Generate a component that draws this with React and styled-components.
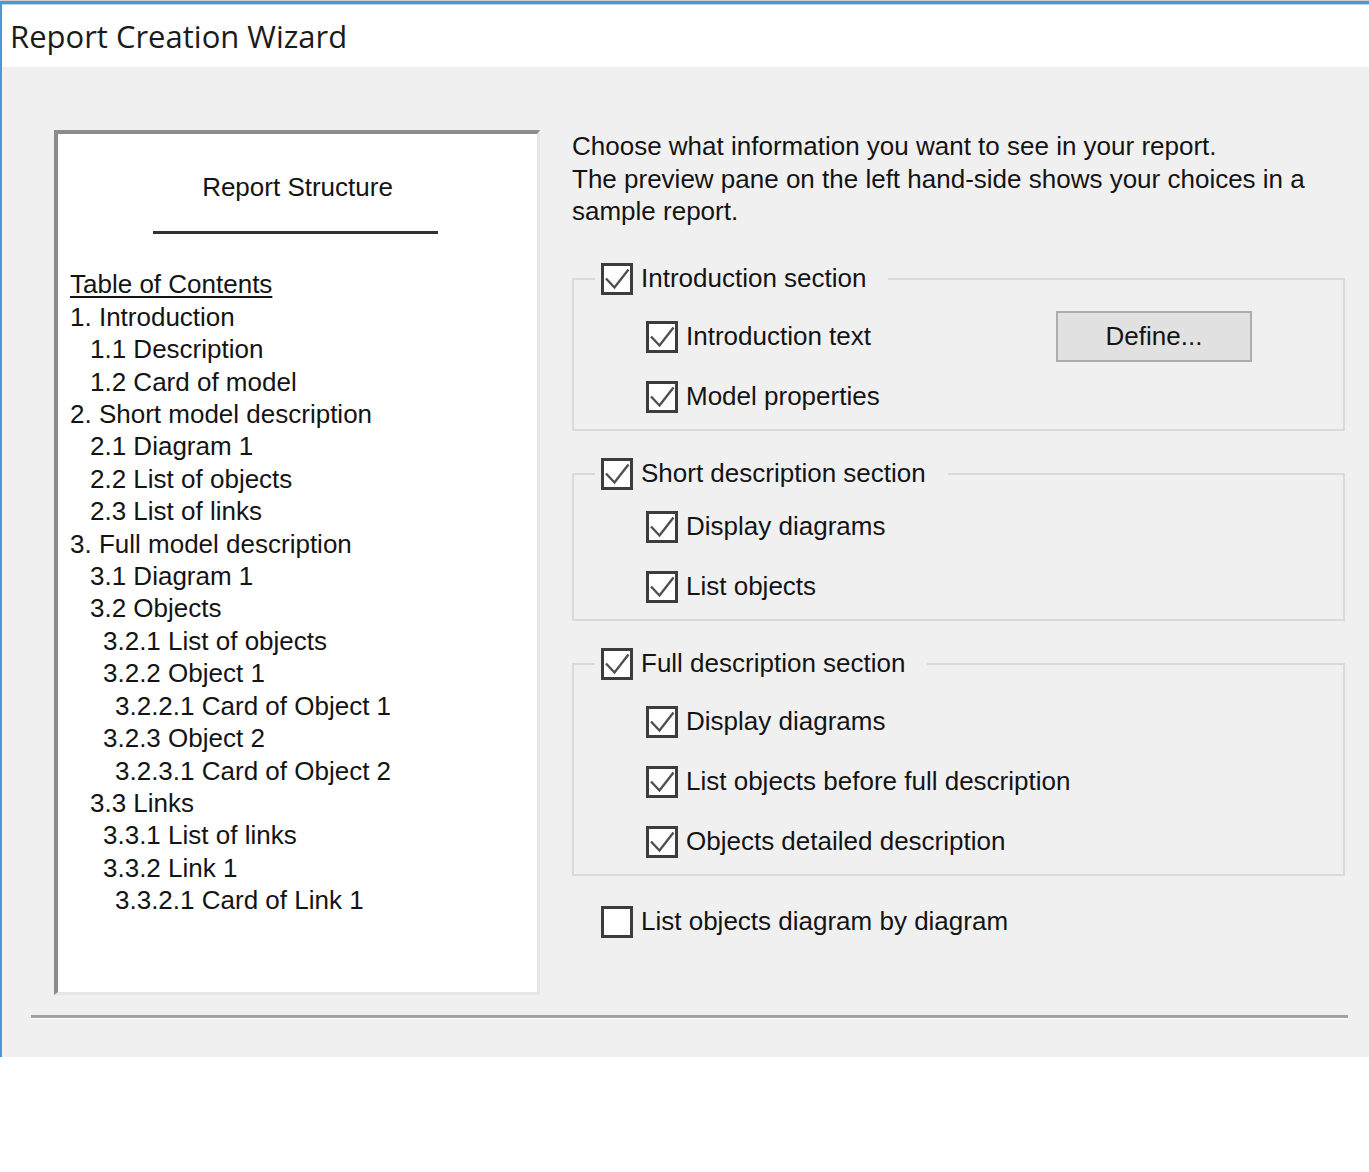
import React from "react";
import styled, { createGlobalStyle } from "styled-components";

const tocItems = [
  [0, "1. Introduction"],
  [1, "1.1 Description"],
  [1, "1.2 Card of model"],
  [0, "2. Short model description"],
  [1, "2.1 Diagram 1"],
  [1, "2.2 List of objects"],
  [1, "2.3 List of links"],
  [0, "3. Full model description"],
  [1, "3.1 Diagram 1"],
  [1, "3.2 Objects"],
  [2, "3.2.1 List of objects"],
  [2, "3.2.2 Object 1"],
  [3, "3.2.2.1 Card of Object 1"],
  [2, "3.2.3 Object 2"],
  [3, "3.2.3.1 Card of Object 2"],
  [1, "3.3 Links"],
  [2, "3.3.1 List of links"],
  [2, "3.3.2 Link 1"],
  [3, "3.3.2.1 Card of Link 1"],
];

const indents = [0, 20, 33, 45];

const groups = [
  {
    title: "Introduction section",
    top: 12,
    items: ["Introduction text", "Model properties"],
  },
  {
    title: "Short description section",
    top: 7,
    items: ["Display diagrams", "List objects"],
  },
  {
    title: "Full description section",
    top: 12,
    items: [
      "Display diagrams",
      "List objects before full description",
      "Objects detailed description",
    ],
  },
];

const Check = ({ checked }) => (
  <Box>
    {checked && (
      <svg width="26" height="26" viewBox="0 0 26 26">
        <path
          d="M2 12.5 L10.5 21.5 L24.5 3.5"
          fill="none"
          stroke="#505050"
          strokeWidth="2.4"
        />
      </svg>
    )}
  </Box>
);

const App = () => {
  return (
    <>
      <GlobalStyle />
      <TopEdge />
      <Window>
        <TitleBar>Report Creation Wizard</TitleBar>
        <Body>
          <Content>
            <Preview>
              <PreviewTitle>Report Structure</PreviewTitle>
              <Rule />
              <TocHeading>Table of Contents</TocHeading>
              {tocItems.map(([level, text], i) => (
                <TocLine key={i} $indent={indents[level]}>
                  {text}
                </TocLine>
              ))}
            </Preview>

            <Options>
              <Intro>
                Choose what information you want to see in your report.
                <br />
                The preview pane on the left hand-side shows your choices in a
                <br />
                sample report.
              </Intro>

              {groups.map((g, gi) => (
                <Group key={g.title} $first={gi === 0}>
                  <Legend>
                    <LegendInner>
                      <Check checked />
                      <Label>{g.title}</Label>
                    </LegendInner>
                  </Legend>
                  <GroupRows $top={g.top}>
                    {g.items.map((item, ii) => (
                      <Row key={item}>
                        <Check checked />
                        <Label>{item}</Label>
                        {gi === 0 && ii === 0 && <Button>Define...</Button>}
                      </Row>
                    ))}
                  </GroupRows>
                </Group>
              ))}

              <LooseRow>
                <Check />
                <Label>List objects diagram by diagram</Label>
              </LooseRow>
            </Options>
          </Content>
          <Separator />
        </Body>
      </Window>
    </>
  );
};

export default App;

// Styled Components

const GlobalStyle = createGlobalStyle`
  html, body {
    margin: 0;
    padding: 0;
    background: #ffffff;
  }
  body {
    font-family: "Liberation Sans", Arial, sans-serif;
    color: #141414;
  }
`;

const TopEdge = styled.div`
  height: 1px;
  background: #cfcfcf;
`;

const Window = styled.div`
  border-top: 3px solid #4a97dc;
  border-left: 2px solid #4a97dc;
`;

const TitleBar = styled.div`
  height: 63px;
  display: flex;
  align-items: center;
  padding-left: 8px;
  background: #ffffff;
  font-family: "Open Sans", "Noto Sans", sans-serif;
  font-size: 31px;
  color: #1b1b1b;
  box-shadow: inset 0 1px 0 #b7d6f2;
`;

const Body = styled.div`
  height: 990px;
  box-sizing: border-box;
  padding-top: 63px;
  background: #f0f0f0;
`;

const Content = styled.div`
  display: flex;
  gap: 32px;
  padding-left: 52px;
`;

const Preview = styled.div`
  width: 486px;
  height: 865px;
  box-sizing: border-box;
  background: #ffffff;
  border-top: 4px solid #8c8c8c;
  border-left: 4px solid #8c8c8c;
  border-right: 3px solid #e6e6e6;
  border-bottom: 3px solid #e6e6e6;
  padding: 37px 0 0 12px;
  font-size: 26px;
  line-height: 32.4px;
`;

const PreviewTitle = styled.div`
  text-align: center;
  padding-right: 12px;
`;

const Rule = styled.div`
  width: 285px;
  height: 3px;
  background: #333333;
  margin: 28px 0 0 83px;
`;

const TocHeading = styled.div`
  margin-top: 34px;
  text-decoration: underline;
  text-underline-offset: 3px;
  text-decoration-thickness: 2px;
`;

const TocLine = styled.div`
  padding-left: ${(p) => p.$indent}px;
  white-space: nowrap;
`;

const Options = styled.div`
  width: 773px;
  display: flex;
  flex-direction: column;
`;

const Intro = styled.div`
  font-size: 26px;
  line-height: 32.5px;
  white-space: nowrap;
`;

const Group = styled.fieldset`
  margin: ${(p) => (p.$first ? "35px" : "27px")} 0 0 0;
  padding: 0;
  border: 2px solid #dadada;
  min-width: 0;
`;

const Legend = styled.legend`
  margin-left: 21px;
  padding: 0 22px 0 6px;
`;

const LegendInner = styled.span`
  display: flex;
  align-items: center;
  gap: 8px;
`;

const GroupRows = styled.div`
  padding: ${(p) => p.$top}px 0 2px 72px;
`;

const Row = styled.div`
  height: 60px;
  display: flex;
  align-items: center;
  gap: 8px;
`;

const LooseRow = styled(Row)`
  margin-top: 16px;
  padding-left: 29px;
`;

const Box = styled.span`
  width: 32px;
  height: 32px;
  flex: none;
  box-sizing: border-box;
  border: 3px solid #3c3c3c;
  background: #ffffff;
  display: flex;
  align-items: center;
  justify-content: center;
`;

const Label = styled.span`
  font-size: 26px;
  color: #141414;
  white-space: nowrap;
`;

const Button = styled.button`
  width: 196px;
  height: 51px;
  margin: 0 91px 0 auto;
  background: #e1e1e1;
  border: 2px solid #adadad;
  font-family: "Liberation Sans", Arial, sans-serif;
  font-size: 26px;
  color: #141414;
  padding: 0;
`;

const Separator = styled.div`
  height: 3px;
  margin: 20px 21px 0 29px;
  background: #a3a3a3;
  border-bottom: 1px solid #ffffff;
`;
